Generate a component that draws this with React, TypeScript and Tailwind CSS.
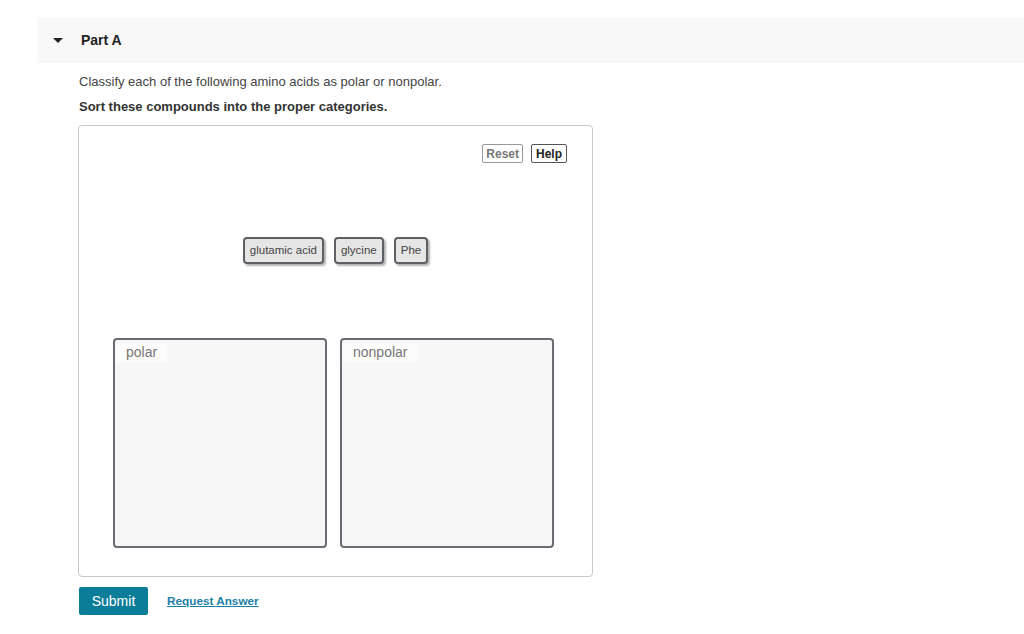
import React from "react";

const font = { fontFamily: '"Liberation Sans", Arial, sans-serif' };

function Chip({ label }: { label: string }) {
  return (
    <div className="h-[27px] px-[5px] flex items-center border-2 border-[#5f5f66] rounded-[4px] bg-[#e6e6e6] text-[11.5px] text-[#444] shadow-[2px_2px_2px_rgba(0,0,0,0.3)]">
      {label}
    </div>
  );
}

function DropZone({ label }: { label: string }) {
  return (
    <div className="w-[214px] h-[210px] border-2 border-[#6b6b73] rounded-[4px] bg-[#f7f7f7]">
      <div className="inline-block ml-[1px] mt-[1px] h-[19px] pl-[10px] pr-[10px] bg-[#fcfcfc] text-[14px] leading-[18px] text-[#777]">
        {label}
      </div>
    </div>
  );
}

export default function App() {
  return (
    <div className="min-h-[634px] bg-white" style={font}>
      <div className="pt-[18px]">
        <div className="ml-[38px] h-[45px] bg-[#f8f8f8] flex items-center">
          <svg width="10" height="6" viewBox="0 0 10 6" className="ml-[15px]">
            <polygon points="0,0 10,0 5,5" fill="#222" />
          </svg>
          <span className="ml-[18px] text-[14px] font-bold text-[#222]">Part A</span>
        </div>
        <div className="ml-[79px]">
          <p className="mt-[11px] text-[13px] leading-[16px] text-[#444]">
            Classify each of the following amino acids as polar or nonpolar.
          </p>
          <p className="mt-[9px] text-[13px] leading-[16px] font-bold text-[#333]">
            Sort these compounds into the proper categories.
          </p>
          <div className="mt-[10px] -ml-[1px] w-[515px] h-[452px] border border-[#c8c8c8] rounded-[4px] flex flex-col">
            <div className="flex justify-end gap-[8px] pt-[18px] pr-[25px]">
              <button className="h-[19px] px-[3px] border border-[#999] rounded-[2px] bg-white text-[12px] font-bold text-[#777] leading-none">
                Reset
              </button>
              <button className="h-[19px] px-[4px] border border-[#555] rounded-[2px] bg-white text-[12px] font-bold text-[#222] leading-none">
                Help
              </button>
            </div>
            <div className="mt-[74px] flex justify-center gap-[10px]">
              <Chip label="glutamic acid" />
              <Chip label="glycine" />
              <Chip label="Phe" />
            </div>
            <div className="mt-[74px] pl-[34px] flex gap-[13px]">
              <DropZone label="polar" />
              <DropZone label="nonpolar" />
            </div>
          </div>
          <div className="mt-[10px] flex items-center">
            <button className="w-[69px] h-[28px] bg-[#0b7d98] rounded-[2px] text-white text-[14px]">
              Submit
            </button>
            <a className="ml-[19px] text-[11.75px] font-bold text-[#1b7fa6] underline">
              Request Answer
            </a>
          </div>
        </div>
      </div>
    </div>
  );
}
